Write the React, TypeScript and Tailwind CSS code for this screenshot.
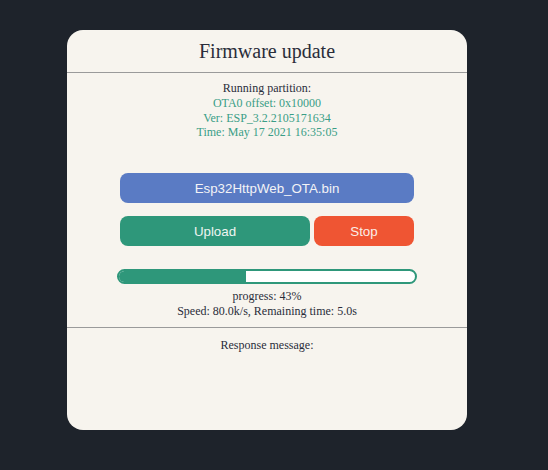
import React from "react";

export default function App() {
  const progress = 43;
  return (
    <div className="min-h-[470px] w-full bg-[#1e232b] pt-[30px] pl-[67px]" style={{ fontFamily: '"Liberation Serif", serif' }}>
      <div className="flex h-[400px] w-[400px] flex-col rounded-[16px] bg-[#f7f4ee] text-[#2a2d3a]">
        <div className="flex h-[42px] items-center justify-center text-[20px] leading-none">Firmware update</div>
        <div className="h-px bg-[#9a9a9a]" />
        <div className="flex flex-col items-center pt-[8px] text-[12px] leading-[14.8px]">
          <div>Running partition:</div>
          <div className="text-[#3a9e86]">OTA0 offset: 0x10000</div>
          <div className="text-[#3a9e86]">Ver: ESP_3.2.2105171634</div>
          <div className="text-[#3a9e86]">Time: May 17 2021 16:35:05</div>
        </div>
        <div className="mt-[33px] flex flex-col items-center" style={{ fontFamily: '"Liberation Sans", Arial, sans-serif' }}>
          <button className="h-[30px] w-[294px] rounded-[8px] bg-[#5a7bc4] pt-px text-[13.333px] text-[#f3f3f6]">Esp32HttpWeb_OTA.bin</button>
          <div className="mt-[13px] flex w-[294px] gap-[4px]">
            <button className="h-[30px] w-[190px] rounded-[8px] bg-[#2e977a] pt-[2px] text-[13.333px] text-[#eef5f2]">Upload</button>
            <button className="h-[30px] w-[100px] rounded-[8px] bg-[#ef5533] pt-[2px] text-[13.333px] text-[#fbeee8]">Stop</button>
          </div>
        </div>
        <div className="mt-[23px] flex justify-center">
          <div className="h-[15px] w-[300px] overflow-hidden rounded-full border-2 border-[#2e977a] bg-white">
            <div className="h-full bg-[#2e977a]" style={{ width: `${progress}%` }} />
          </div>
        </div>
        <div className="mt-[5px] flex flex-col items-center text-[12px] leading-[14.8px]">
          <div>progress: {progress}%</div>
          <div>Speed: 80.0k/s, Remaining time: 5.0s</div>
        </div>
        <div className="mt-[8px] h-px bg-[#9a9a9a]" />
        <div className="flex justify-center pt-[10px] text-[12px] leading-[14.8px]">Response message:</div>
      </div>
    </div>
  );
}
